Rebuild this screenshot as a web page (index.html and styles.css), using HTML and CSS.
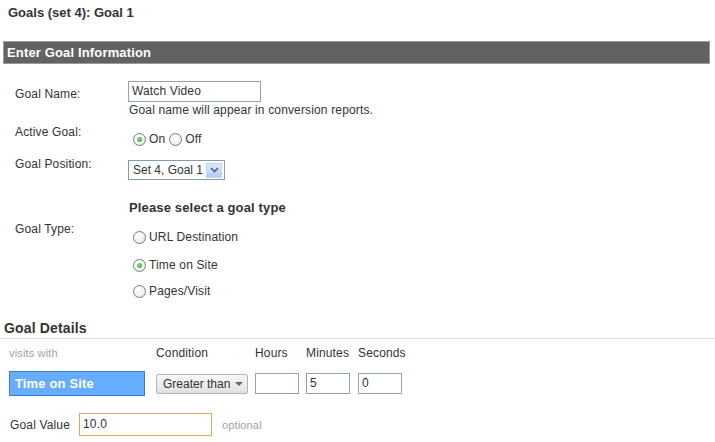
FILE: index.html
```html
<!DOCTYPE html>
<html>
<head>
<title>Goals (set 4): Goal 1</title>
<link rel="stylesheet" href="styles.css">
</head>
<body>
<h1 class="title">Goals (set 4): Goal 1</h1>
<div class="bar">Enter Goal Information</div>

<div class="form">
  <div class="row r-name">
    <div class="lbl">Goal Name:</div>
    <div class="fld">
      <div class="txt w-name">Watch Video</div>
      <div class="hint">Goal name will appear in conversion reports.</div>
    </div>
  </div>
  <div class="row r-active">
    <div class="lbl">Active Goal:</div>
    <div class="fld radios">
      <span class="radio on"></span><span class="rl">On</span>
      <span class="radio"></span><span class="rl">Off</span>
    </div>
  </div>
  <div class="row r-pos">
    <div class="lbl">Goal Position:</div>
    <div class="fld">
      <div class="sel">Set 4, Goal 1 <span class="selbtn"><svg width="9" height="6" viewBox="0 0 9 6"><path d="M1 1 L4.5 4.5 L8 1" fill="none" stroke="#4d6185" stroke-width="1.6"/></svg></span></div>
    </div>
  </div>
  <div class="row r-head">
    <div class="lbl"></div>
    <div class="fld sub">Please select a goal type</div>
  </div>
  <div class="row r-type">
    <div class="lbl">Goal Type:</div>
    <div class="fld">
      <div class="opt o1"><span class="radio"></span><span class="rl">URL Destination</span></div>
      <div class="opt o2"><span class="radio on"></span><span class="rl">Time on Site</span></div>
      <div class="opt o3"><span class="radio"></span><span class="rl">Pages/Visit</span></div>
    </div>
  </div>
</div>

<h2 class="details">Goal Details</h2>
<div class="cond">
  <div class="muted">visits with</div>
  <div>Condition</div>
  <div>Hours</div>
  <div>Minutes</div>
  <div>Seconds</div>
  <div class="kind">Time on Site</div>
  <div><span class="drop">Greater than <span class="caret"></span></span></div>
  <div class="txt small"></div>
  <div class="txt small">5</div>
  <div class="txt small">0</div>
</div>
<div class="value">
  <span class="vlbl">Goal Value</span>
  <div class="txt gold">10.0</div>
  <span class="muted">optional</span>
</div>
</body>
</html>
```
FILE: styles.css
```css
body {margin: 0;font-family: "Liberation Sans", Arial, sans-serif;font-size: 12px;color: #333;background: #fff;letter-spacing: 0.15px;}
.title {margin: 0;padding: 5px 8px 0;font-size: 13px;line-height: 16px;font-weight: bold;color: #333;letter-spacing: 0;}
.bar {margin: 20px 5px 0 3px;height: 21px;line-height: 21px;border: 1px solid #9a9a9a;background: #626262;color: #fff;font-weight: bold;font-size: 13px;padding-left: 3px;}

.form {padding-left: 15px;}
.row {display: flex;}
.lbl {width: 113px;flex: none;line-height: 14px;}
.fld {line-height: 14px;}
.r-name {margin-top: 17px;}
.r-name .lbl {padding-top: 6px;}
.r-active {margin-top: 8px;}
.r-active .fld {padding-top: 7px;padding-left: 5px;}
.r-pos {margin-top: 11px;}
.r-pos .fld {padding-top: 3px;}
.r-head {margin-top: 20px;}
.r-type {margin-top: 6px;}
.r-type .fld {padding-left: 5px;}
.sub {font-weight: bold;font-size: 13px;line-height: 16px;padding-left: 1px;}

.txt {box-sizing: border-box;border: 1px solid #8fa2b8;height: 21px;line-height: 19px;padding-left: 3px;font-size: 12px;color: #333;background: #fff;}
.w-name {width: 133px;}
.hint {margin-top: 1px;padding-left: 1px;}

.radios {display: flex;align-items: center;}
.radio {display: inline-block;box-sizing: border-box;width: 13px;height: 13px;border: 1px solid #6c7d92;border-radius: 50%;background: radial-gradient(circle at 40% 35%, #fff 0%, #f2f2ee 55%, #dcdcd5 100%);vertical-align: middle;position: relative;flex: none;}
.radio.on::after {content: "";position: absolute;left: 3px;top: 3px;width: 5px;height: 5px;border-radius: 50%;background: radial-gradient(circle at 40% 40%, #8fe07a, #2e9a1e);}
.rl {margin-left: 3px;margin-right: 4px;vertical-align: middle;}
.opt {display: flex;align-items: center;height: 14px;}
.o1 {margin-top: 8px;}
.o2 {margin-top: 14px;}
.o3 {margin-top: 12px;}

.sel {box-sizing: border-box;width: 97px;height: 20px;border: 1px solid #7f9db9;display: flex;align-items: center;justify-content: space-between;padding: 0 2px 0 4px;font-size: 12px;letter-spacing: 0;}
.selbtn {width: 16px;height: 15px;background: linear-gradient(#dfe9fb, #b7caf1);border: 1px solid #c3d3f5;box-sizing: border-box;display: flex;align-items: center;justify-content: center;}

.details {margin: 22px 0 0;padding: 0 4px 1px;font-size: 14px;line-height: 17px;font-weight: bold;color: #333;border-bottom: 1px solid #ddd;}
.cond {display: grid;grid-template-columns: 147px 99px 51px 52px 44px;grid-template-rows: 14px 25px;row-gap: 11px;padding-left: 9px;margin-top: 7px;line-height: 14px;align-items: center;}
.muted {color: #a0a0a0;font-size: 11px;}
.kind {box-sizing: border-box;width: 136px;height: 25px;background: #66adff;border: 1px solid #3a7bd5;color: #fff;font-weight: bold;font-size: 13px;line-height: 23px;padding-left: 5px;}
.drop {display: inline-flex;align-items: center;box-sizing: border-box;width: 92px;height: 20px;border: 1px solid #b4b4b4;border-radius: 2px;background: linear-gradient(#f7f7f7, #e1e1e1);padding-left: 6px;font-size: 12px;color: #333;letter-spacing: 0;}
.caret {display: inline-block;margin-left: 5px;border-left: 4px solid transparent;border-right: 4px solid transparent;border-top: 4px solid #666;}
.cond .small {width: 44px;height: 21px;}

.value {display: flex;align-items: center;margin-top: 17px;padding-left: 10px;}
.vlbl {width: 69px;}
.gold {width: 133px;height: 23px;line-height: 21px;border-color: #d6ad5d;}
.value .muted {margin-left: 10px;}
```
